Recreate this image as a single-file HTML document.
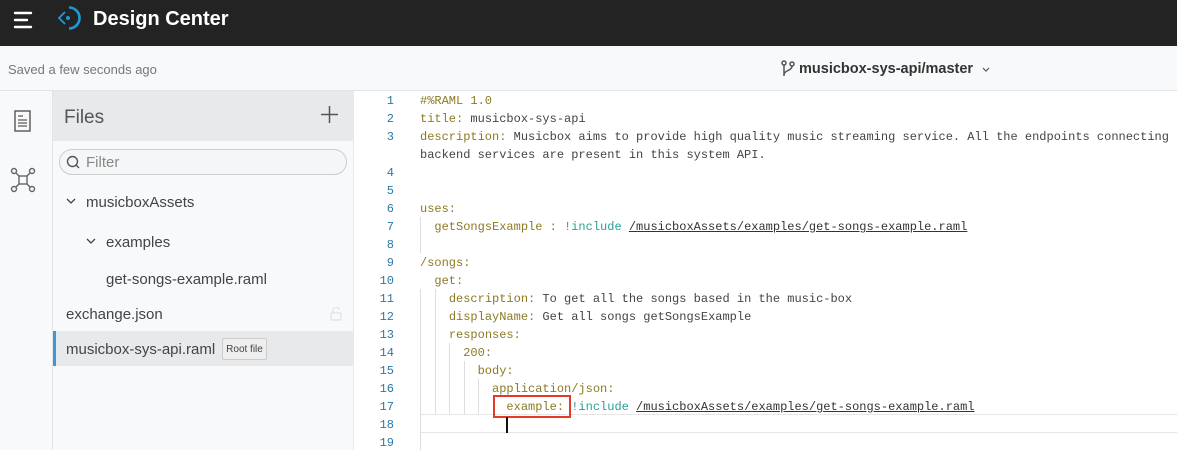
<!DOCTYPE html>
<html><head><meta charset="utf-8"><style>
*{margin:0;padding:0;box-sizing:border-box}
body{width:1177px;height:450px;overflow:hidden;background:#fff;font-family:"Liberation Sans",sans-serif;position:relative}
.top{position:absolute;left:0;top:0;width:1177px;height:46px;background:#232323}
.sub{position:absolute;left:0;top:46px;width:1177px;height:45px;background:#f8f9fa;border-bottom:1px solid #e2e4e6}
.rail{position:absolute;left:0;top:91px;width:53px;height:359px;background:#f8f9fa;border-right:1px solid #e2e4e6}
.files{position:absolute;left:53px;top:91px;width:301px;height:359px;background:#f8f9fa;border-right:1px solid #e8e8e8}
.fh{position:absolute;left:0;top:0;width:300px;height:50px;background:#e8e9ea}
.t{position:absolute;white-space:nowrap;color:#444;font-size:15px}
.code{position:absolute;font-family:"Liberation Mono",monospace;font-size:12px;line-height:18px;white-space:pre;color:#444}
.ln{position:absolute;left:356px;width:38px;text-align:right;font-family:"Liberation Mono",monospace;font-size:12px;line-height:18px;color:#2d78a6}
.k{color:#8c7a22}.i{color:#2aa198}.p{text-decoration:underline;color:#333}
.g{position:absolute;width:1px;background:#ddd}
</style></head><body>
<div class="top">
<svg style="position:absolute;left:13px;top:10px" width="22" height="20"><g stroke="#fff" stroke-width="2.4" stroke-linecap="round"><line x1="2" y1="3" x2="18" y2="3"/><line x1="2" y1="10" x2="14" y2="10"/><line x1="2" y1="17" x2="18" y2="17"/></g></svg>
<svg style="position:absolute;left:54px;top:4px" width="30" height="28"><path d="M15 3.5 A10.5 10.5 0 1 1 15 24.5" fill="none" stroke="#1d9ad6" stroke-width="2.6"/><path d="M11 8 L5 14 L11 20" fill="none" stroke="#1d9ad6" stroke-width="1.8"/><circle cx="14" cy="14" r="2" fill="#1d9ad6"/></svg>
<div class="t" style="left:93px;top:8px;color:#fff;font-size:20px;font-weight:bold">Design Center</div>
</div>
<div class="sub">
<div class="t" style="left:8px;top:16px;color:#777;font-size:13px">Saved a few seconds ago</div>
<svg style="position:absolute;left:781px;top:14px" width="14" height="18"><g fill="none" stroke="#555" stroke-width="1.5"><circle cx="3" cy="3" r="2"/><line x1="3" y1="5" x2="3" y2="16"/><circle cx="11" cy="4" r="2"/><path d="M11 6 C11 11 3 10 3 15"/></g></svg>
<div class="t" style="left:799px;top:15px;color:#333;font-weight:bold;font-size:14.5px">musicbox-sys-api/master</div>
<svg style="position:absolute;left:982px;top:21px" width="8" height="6"><path d="M1 1 L4 4 L7 1" fill="none" stroke="#555" stroke-width="1.2"/></svg>
</div>
<div class="rail">
<svg style="position:absolute;left:14px;top:19px" width="18" height="22"><rect x="1" y="1" width="15" height="20" fill="none" stroke="#555" stroke-width="1.4"/><g stroke="#555" stroke-width="1.2"><line x1="4" y1="6" x2="9" y2="6"/><line x1="4" y1="10" x2="13" y2="10"/><line x1="4" y1="13" x2="13" y2="13"/><line x1="4" y1="16" x2="13" y2="16"/></g></svg>
<svg style="position:absolute;left:10px;top:76px" width="26" height="26"><g stroke="#666" stroke-width="1.4" fill="none"><circle cx="4" cy="4" r="2.5"/><circle cx="22" cy="4" r="2.5"/><circle cx="4" cy="22" r="2.5"/><circle cx="22" cy="22" r="2.5"/><rect x="9" y="9" width="8" height="8"/><line x1="6" y1="6" x2="9" y2="9"/><line x1="20" y1="6" x2="17" y2="9"/><line x1="6" y1="20" x2="9" y2="17"/><line x1="20" y1="20" x2="17" y2="17"/></g></svg>
</div>
<div class="files">
<div class="fh"><div class="t" style="left:11px;top:16px;font-size:19px;color:#555">Files</div>
<svg style="position:absolute;left:268px;top:15px" width="17" height="17"><g stroke="#555" stroke-width="1.5"><line x1="8.5" y1="0" x2="8.5" y2="17"/><line x1="0" y1="8.5" x2="17" y2="8.5"/></g></svg></div>
<div style="position:absolute;left:6px;top:58px;width:288px;height:26px;border:1px solid #ccc;border-radius:13px;background:#f5f6f7"></div>
<svg style="position:absolute;left:13px;top:64px" width="16" height="16"><circle cx="6.5" cy="6.5" r="5" fill="none" stroke="#555" stroke-width="1.4"/><line x1="10" y1="10" x2="13" y2="13" stroke="#555" stroke-width="1.4"/></svg>
<div class="t" style="left:33px;top:63px;color:#888">Filter</div>
<svg style="position:absolute;left:13px;top:107px" width="10" height="7"><path d="M1 1 L5 5 L9 1" fill="none" stroke="#444" stroke-width="1.3"/></svg>
<div class="t" style="left:33px;top:103px">musicboxAssets</div>
<svg style="position:absolute;left:33px;top:147px" width="10" height="7"><path d="M1 1 L5 5 L9 1" fill="none" stroke="#444" stroke-width="1.3"/></svg>
<div class="t" style="left:53px;top:143px">examples</div>
<div class="t" style="left:53px;top:180px">get-songs-example.raml</div>
<div class="t" style="left:13px;top:215px">exchange.json</div>
<svg style="position:absolute;left:277px;top:216px" width="12" height="14"><rect x="1" y="6" width="10" height="7" fill="none" stroke="#ddd"/><path d="M3 6 V3 a3 3 0 0 1 6 0" fill="none" stroke="#ddd"/></svg>
<div style="position:absolute;left:0;top:240px;width:300px;height:35px;background:#e8e9ea;border-left:3px solid #3a9ad9"></div>
<div class="t" style="left:13px;top:250px">musicbox-sys-api.raml</div>
<div style="position:absolute;left:169px;top:247px;width:45px;height:22px;border:1px solid #ccc;border-radius:2px;background:#eee;font-size:10px;color:#444;text-align:center;line-height:21px">Root file</div>
</div>
<div style="position:absolute;left:420px;top:414px;width:757px;height:19px;border-top:1px solid #e6e6e6;border-bottom:1px solid #e6e6e6"></div>
<div class="g" style="left:420px;top:217px;height:36px"></div>
<div class="g" style="left:420px;top:289px;height:161px"></div>
<div class="g" style="left:435px;top:289px;height:125px"></div>
<div class="g" style="left:449px;top:343px;height:71px"></div>
<div class="g" style="left:464px;top:361px;height:53px"></div>
<div class="g" style="left:478px;top:379px;height:35px"></div>
<div class="ln" style="top:92px">1<br>2<br>3<br><br>4<br>5<br>6<br>7<br>8<br>9<br>10<br>11<br>12<br>13<br>14<br>15<br>16<br>17<br>18<br>19</div>
<div class="code" style="left:420px;top:92px"><span class="k">#%RAML 1.0</span>
<span class="k">title:</span> musicbox-sys-api
<span class="k">description:</span> Musicbox aims to provide high quality music streaming service. All the endpoints connecting
backend services are present in this system API.


<span class="k">uses:</span>
  <span class="k">getSongsExample :</span> <span class="i">!include</span> <span class="p">/musicboxAssets/examples/get-songs-example.raml</span>

<span class="k">/songs:</span>
  <span class="k">get:</span>
    <span class="k">description:</span> To get all the songs based in the music-box
    <span class="k">displayName:</span> Get all songs getSongsExample
    <span class="k">responses:</span>
      <span class="k">200:</span>
        <span class="k">body:</span>
          <span class="k">application/json:</span>
            <span class="k">example:</span> <span class="i">!include</span> <span class="p">/musicboxAssets/examples/get-songs-example.raml</span>
</div>
<div style="position:absolute;left:493px;top:395px;width:78px;height:23px;border:2.5px solid #e53a2a"></div>
<div style="position:absolute;left:506px;top:417px;width:2px;height:16px;background:#111"></div>
</body></html>
